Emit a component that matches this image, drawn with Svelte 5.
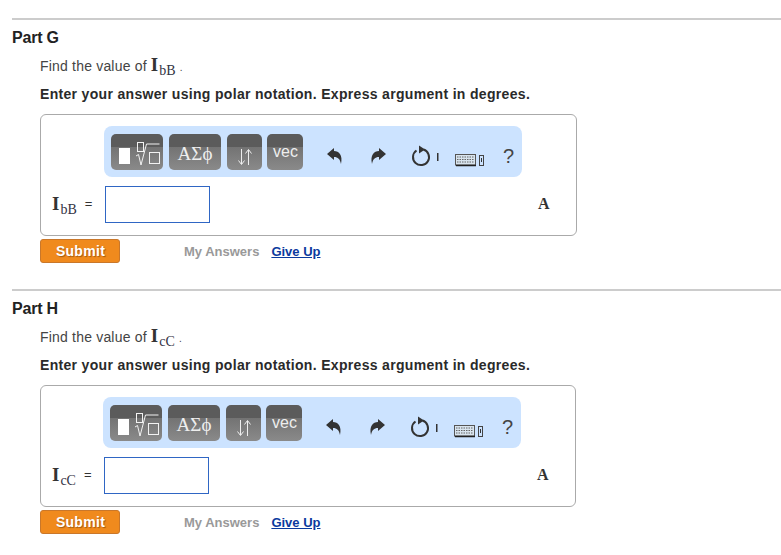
<script>
  const parts = [
    { id: 'G', sub: 'bB', cls: 'g' },
    { id: 'H', sub: 'cC', cls: 'h' }
  ];
</script>

{#each parts as p}
  <section class="part {p.cls}">
    <h2>Part {p.id}</h2>
    <div class="body">
      <p class="find">Find the value of <span class="var">I<sub>{p.sub}</sub></span> <span class="dot">.</span></p>
      <p class="enter">Enter your answer using polar notation. Express argument in degrees.</p>
      <div class="box">
        <div class="toolbar">
          <div class="btn b1">
            <svg width="52" height="36" viewBox="0 0 52 36">
              <rect x="8" y="14" width="11" height="16" fill="#fff"/>
              <rect x="26.500" y="8.500" width="6" height="9" fill="none" stroke="#f2f2f2"/>
              <path d="M25 22l2.500 -1.500 2.500 10.500 5.500 -21h13" fill="none" stroke="#f2f2f2" stroke-width="1"/>
              <rect x="38.500" y="18.500" width="10" height="11" fill="none" stroke="#f2f2f2"/>
            </svg>
          </div>
          <div class="btn b2"><span>ΑΣϕ</span></div>
          <div class="btn b3">
            <svg width="14" height="18" viewBox="0 0 14 18">
              <path d="M3.500 1v15M0.500 12.500l3 4 3 -4M10.500 17v-15M7.500 5.500l3 -4 3 4" fill="none" stroke="#eee" stroke-width="1"/>
            </svg>
          </div>
          <div class="btn b4"><span>vec</span></div>
          <div class="actions">
            <svg class="undo" width="18" height="18" viewBox="0 0 18 18"><path d="M1 7 L8 1 V4 C13 4 17 8 15 17 C14 12 12 10 8 10 V13 Z" fill="#333"/></svg>
            <svg class="redo" width="18" height="18" viewBox="0 0 18 18"><path d="M17 7 L10 1 V4 C5 4 1 8 3 17 C4 12 6 10 10 10 V13 Z" fill="#333"/></svg>
            <svg class="reset" width="34" height="24" viewBox="0 0 34 24"><path d="M5.500 6.500 A8 8 0 1 0 12.500 5.500" fill="none" stroke="#333" stroke-width="2"/><path d="M8 1.500 L14 5.500 L8 9.500 Z" fill="#333"/><rect x="26" y="9" width="1.500" height="8" fill="#333"/></svg>
            <svg class="kbd" width="32" height="14" viewBox="0 0 32 14"><rect x="0.500" y="1.500" width="20" height="10.500" fill="#d8e4ee" stroke="#555"/><path d="M2 4h17M2 6.500h17M2 9h17" stroke="#666" stroke-dasharray="1.500 1" /><path d="M1 12.500h20" stroke="#222" stroke-width="1.500"/><rect x="24.500" y="2.500" width="4" height="10" fill="none" stroke="#444"/><path d="M26.500 5v4" stroke="#333"/></svg>
            <span class="q">?</span>
          </div>
        </div>
        <div class="row">
          <span class="label"><span class="var">I<sub>{p.sub}</sub></span><span class="eq">=</span></span>
          <input type="text" aria-label="answer" />
          <span class="unit">A</span>
        </div>
      </div>
      <div class="controls">
        <button class="submit">Submit</button>
        <span class="mine">My Answers</span>
        <a href="#give-up" class="give">Give Up</a>
      </div>
    </div>
  </section>
{/each}

<style>
  :global(body) {
    margin: 0;
    background: #fff;
    font-family: "Liberation Sans", Arial, sans-serif;
    color: #333;
  }
  .part {
    margin-left: 12px;
    border-top: 2px solid #ccc;
    padding-top: 9px;
  }
  .part.g { margin-top: 18px; height: 260px; }
  h2 {
    margin: 0;
    font-size: 16px;
    line-height: 18px;
    font-weight: bold;
    color: #222;
    letter-spacing: -0.2px;
  }
  .body { padding-left: 28px; }
  .find {
    margin: 9px 0 0;
    font-size: 14px;
    line-height: 18px;
    height: 19px;
    color: #444;
    white-space: nowrap;
    letter-spacing: 0.19px;
  }
  .var {
    font-family: "Liberation Serif", serif;
    font-weight: bold;
    font-size: 19px;
    color: #333;
    letter-spacing: 0;
  }
  .var sub {
    font-weight: normal;
    font-size: 14px;
    line-height: 0;
    vertical-align: -4px;
    color: #334;
    margin-left: 1px;
  }
  .dot { font-size: 10px; }
  .enter {
    margin: 10px 0 0;
    font-size: 14px;
    line-height: 18px;
    font-weight: bold;
    letter-spacing: 0.32px;
    color: #2a2a2a;
    white-space: nowrap;
  }
  .box {
    margin-top: 11px;
    box-sizing: border-box;
    width: 537px;
    height: 122px;
    border: 1px solid #aaa;
    border-radius: 6px;
    padding: 11px 0 0 63px;
  }
  .h .box { width: 536px; padding-left: 62px; }
  .toolbar {
    box-sizing: border-box;
    width: 418px;
    height: 51px;
    background: #cce3ff;
    border-radius: 8px;
    padding: 8px 0 0 7px;
    display: flex;
    gap: 6px;
  }
  .btn {
    height: 36px;
    border-radius: 5px;
    overflow: hidden;
    background: linear-gradient(#5b5b5b 0 13px, #737373 13px, #8a8a8a 100%);
    color: #eee;
    display: flex;
    align-items: center;
    justify-content: center;
    box-sizing: border-box;
  }
  .b1 { width: 52px; }
  .b2 { width: 52px; font: 19px "Liberation Serif", serif; padding-top: 3px; }
  .b3 { width: 35px; padding-top: 10px; }
  .b4 { width: 36px; font-size: 16px; margin-left: -1px; padding-left: 1px; }
  .btn span { display: block; }
  .actions { position: relative; flex: 1; }
  .actions svg, .q { position: absolute; }
  .undo { left: 17px; top: 13px; }
  .redo { left: 60px; top: 13px; }
  .reset { left: 102px; top: 10px; }
  .kbd { left: 146px; top: 19px; }
  .q { left: 194px; top: 11px; font-size: 20px; line-height: 23px; color: #444; }
  .row {
    display: flex;
    align-items: center;
    margin-top: 9px;
    height: 37px;
  }
  .label {
    margin-left: -52px;
    width: 53px;
    display: flex;
    align-items: center;
    white-space: nowrap;
    padding-bottom: 2px;
    box-sizing: border-box;
  }
  .h .label { margin-left: -51px; width: 52px; }
  .label .var { font-size: 19px; }
  .label sub { font-size: 14px; }
  .eq { margin-left: 8px; font-size: 13px; color: #333; }
  input {
    box-sizing: border-box;
    width: 105px;
    height: 37px;
    margin: 0;
    border: 1px solid #2f66c4;
    background: #fff;
    outline: none;
    padding: 0;
  }
  .unit {
    margin-left: 328px;
    padding-bottom: 2px;
    font: bold 16px "Liberation Serif", serif;
    color: #333;
  }
  .controls {
    display: flex;
    align-items: center;
    margin-top: 3px;
    height: 24px;
  }
  .submit {
    box-sizing: border-box;
    width: 80px;
    height: 24px;
    padding: 0 0 0 1px;
    background: #f08a1d;
    border: 1px solid #c9772a;
    border-radius: 3px;
    color: #fff;
    font: bold 14px "Liberation Sans", Arial, sans-serif;
    letter-spacing: 0.3px;
    text-shadow: 1px 1px 1px #a35a10;
  }
  .mine {
    margin-left: 64px;
    font-size: 13px;
    font-weight: bold;
    color: #999;
  }
  .give {
    margin-left: 12px;
    font-size: 13px;
    font-weight: bold;
    color: #0b3a9e;
  }
</style>
